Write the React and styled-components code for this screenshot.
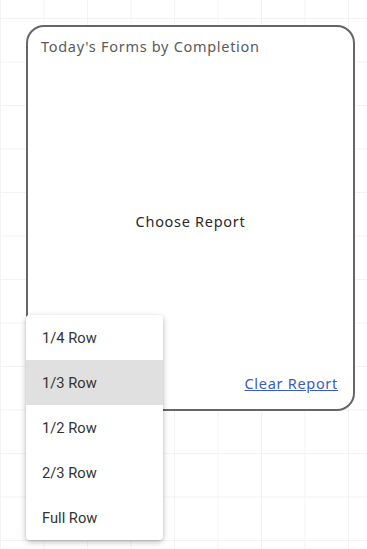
import React from 'react';
import styled, { createGlobalStyle } from 'styled-components';

const GlobalStyle = createGlobalStyle`
  html, body {
    margin: 0;
    padding: 0;
  }
  body {
    width: 367px;
    height: 549px;
    overflow: hidden;
    background-color: #ffffff;
    background-image:
      linear-gradient(to right, #f3f3f3 1px, transparent 1px),
      linear-gradient(to bottom, #f3f3f3 1px, transparent 1px);
    background-size: 43.5px 43.5px;
    background-position: 0 18px;
    font-family: "Noto Sans", "Liberation Sans", sans-serif;
  }
`;

const Page = styled.div`
  padding: 25px 12px 0 26px;
`;

const Card = styled.div`
  position: relative;
  box-sizing: border-box;
  width: 329px;
  height: 386px;
  border: 2px solid #666666;
  border-radius: 18px;
  background: #ffffff;
  display: flex;
  flex-direction: column;
`;

const Title = styled.div`
  padding: 9px 13px 0;
  font-size: 14.5px;
  color: #5a5a5a;
  letter-spacing: 0.7px;
`;

const Body = styled.div`
  flex: 1;
  display: flex;
  align-items: center;
  justify-content: center;
  font-size: 14.5px;
  letter-spacing: 0.7px;
  color: #2a2a2a;
  padding-top: 12px;
`;

const Footer = styled.div`
  display: flex;
  justify-content: flex-end;
  padding: 0 15px 16px;
`;

const ClearLink = styled.a`
  font-size: 14.5px;
  color: #3b5bc4;
  text-decoration: underline;
  cursor: pointer;
  letter-spacing: 0.7px;
`;

const Menu = styled.ul`
  position: absolute;
  left: -2px;
  top: 288px;
  width: 137px;
  margin: 0;
  padding: 0;
  list-style: none;
  background: #ffffff;
  border-radius: 4px;
  box-shadow: 0 2px 6px rgba(0, 0, 0, 0.25), 0 1px 2px rgba(0, 0, 0, 0.12);
  overflow: hidden;
`;

const MenuItem = styled.li`
  height: 45px;
  display: flex;
  align-items: center;
  padding-left: 16px;
  font-family: Roboto, "Liberation Sans", sans-serif;
  font-size: 14.7px;
  color: #333333;
  background: ${(props) => (props.active ? '#e0e0e0' : '#ffffff')};
  cursor: pointer;
`;

const sizes = ['1/4 Row', '1/3 Row', '1/2 Row', '2/3 Row', 'Full Row'];

function App() {
  return (
    <>
      <GlobalStyle />
      <Page>
        <Card>
          <Title>Today's Forms by Completion</Title>
          <Body>Choose Report</Body>
          <Footer>
            <ClearLink>Clear Report</ClearLink>
          </Footer>
          <Menu>
            {sizes.map((s) => (
              <MenuItem key={s} active={s === '1/3 Row'}>{s}</MenuItem>
            ))}
          </Menu>
        </Card>
      </Page>
    </>
  );
}

export default App;
